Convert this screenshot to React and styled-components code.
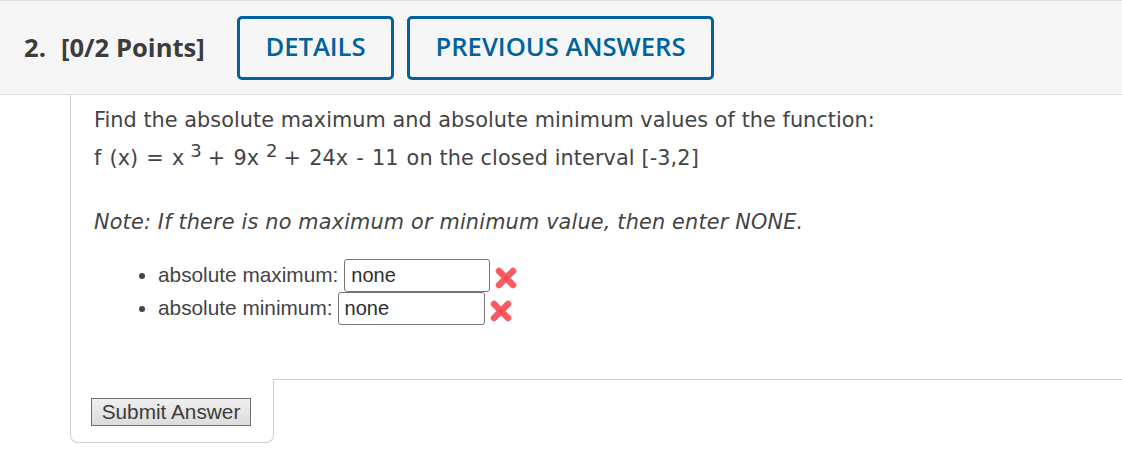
import React from "react";
import styled, { createGlobalStyle } from "styled-components";

const GlobalStyle = createGlobalStyle`
  html, body {
    margin: 0;
    padding: 0;
    background: #fff;
  }
  body {
    font-family: "Open Sans", "Liberation Sans", sans-serif;
    color: #444;
  }
`;

const Page = styled.div`
  width: 1122px;
  height: 460px;
  overflow: hidden;
`;

const Header = styled.header`
  display: flex;
  align-items: center;
  height: 93px;
  padding-left: 24px;
  background: #f6f6f6;
  border-top: 1px solid #e0e0e0;
  border-bottom: 1px solid #dedede;
`;

const Title = styled.h2`
  width: 213px;
  margin: 0;
  font-size: 25.6px;
  font-weight: 700;
  white-space: pre;
  color: #3c3c3c;
`;

const TitleNumber = styled.span`
  margin-right: 15px;
`;

const HeaderButton = styled.button`
  box-sizing: border-box;
  height: 64px;
  width: ${(p) => p.$width}px;
  margin-right: 13px;
  padding: 0 0 2px;
  background: transparent;
  border: 3px solid #00639c;
  border-radius: 5px;
  font-family: inherit;
  font-size: 25.6px;
  font-weight: 600;
  color: #00639c;
`;

const Panel = styled.section`
  margin-left: 70px;
`;

const Content = styled.div`
  box-sizing: border-box;
  height: 284px;
  padding: 6px 0 0 23px;
  border-left: 1px solid #cfcfcf;
`;

const Line = styled.p`
  margin: 0;
  font-family: "DejaVu Sans", Verdana, sans-serif;
  font-size: 20.8px;
  line-height: 38px;
  letter-spacing: 0.04px;
  white-space: nowrap;
`;

const Formula = styled.span`
  word-spacing: 1.5px;
`;

const Interval = styled.span`
  letter-spacing: 0.1px;
`;

const Sup = styled.sup`
  font-size: 18px;
  line-height: 0;
  margin: 0 6px 0 ${(p) => p.$left}px;
`;

const Note = styled(Line)`
  margin-top: 26px;
  font-style: italic;
  letter-spacing: 0.17px;
`;

const AnswerList = styled.ul`
  margin: 18px 0 0;
  padding: 0 0 0 64px;
  font-family: "Liberation Sans", Arial, sans-serif;
  font-size: 20.8px;
  line-height: 31px;
`;

const AnswerRow = styled.li`
  height: 33px;
  white-space: nowrap;
`;

const AnswerInput = styled.input`
  box-sizing: border-box;
  width: ${(p) => p.$width}px;
  height: 33px;
  margin-left: ${(p) => p.$gap}px;
  padding: 0 6px;
  vertical-align: top;
  background: #fff;
  border: 1px solid #767676;
  border-radius: 3px;
  font-family: inherit;
  font-size: 20px;
  color: #2e2e2e;
`;

const WrongMark = styled.svg`
  width: 24px;
  height: 24px;
  margin-left: 4px;
  margin-top: 7px;
  vertical-align: top;
  filter: blur(0.7px);
`;

const Footer = styled.div`
  display: flex;
  align-items: flex-start;
`;

const SubmitBox = styled.div`
  box-sizing: border-box;
  width: 204px;
  height: 64px;
  padding: 19px 0 0 20px;
  border: 1px solid #cfcfcf;
  border-top: none;
  border-radius: 0 0 8px 8px;
`;

const FooterRule = styled.div`
  flex: 1;
  border-top: 1px solid #cfcfcf;
`;

const SubmitButton = styled.button`
  box-sizing: border-box;
  width: 160px;
  height: 28px;
  padding: 0;
  background: linear-gradient(#efefef, #dcdcdc);
  border: 1px solid #6f6f6f;
  font-family: "Liberation Sans", Arial, sans-serif;
  font-size: 20.8px;
  color: #3c3c3c;
`;

function Wrong() {
  return (
    <WrongMark viewBox="0 0 24 24">
      <path
        d="M5 5 L19 19 M19 5 L5 19"
        stroke="#fb5a62"
        strokeWidth="6.5"
        strokeLinecap="round"
        fill="none"
      />
      <path d="M12 9 L15 12 L12 15 L9 12 Z" fill="#f44650" />
    </WrongMark>
  );
}

export default function App() {
  return (
    <Page>
      <GlobalStyle />
      <Header>
        <Title>
          <TitleNumber>2.</TitleNumber>[0/2 Points]
        </Title>
        <HeaderButton $width={157}>DETAILS</HeaderButton>
        <HeaderButton $width={307}>PREVIOUS ANSWERS</HeaderButton>
      </Header>
      <Panel>
        <Content>
          <Line>Find the absolute maximum and absolute minimum values of the function:</Line>
          <Line>
            <Formula>
              f (x) = x<Sup $left={6}>3</Sup>+ 9x<Sup $left={7}>2</Sup>+ 24x - 11{" "}
            </Formula>
            <Interval>on the closed interval [-3,2]</Interval>
          </Line>
          <Note>Note: If there is no maximum or minimum value, then enter NONE.</Note>
          <AnswerList>
            <AnswerRow>
              absolute maximum:
              <AnswerInput $gap={6} $width={146} defaultValue="none" />
              <Wrong />
            </AnswerRow>
            <AnswerRow>
              absolute minimum:
              <AnswerInput $gap={5} $width={147} defaultValue="none" />
              <Wrong />
            </AnswerRow>
          </AnswerList>
        </Content>
        <Footer>
          <SubmitBox>
            <SubmitButton>Submit Answer</SubmitButton>
          </SubmitBox>
          <FooterRule />
        </Footer>
      </Panel>
    </Page>
  );
}
